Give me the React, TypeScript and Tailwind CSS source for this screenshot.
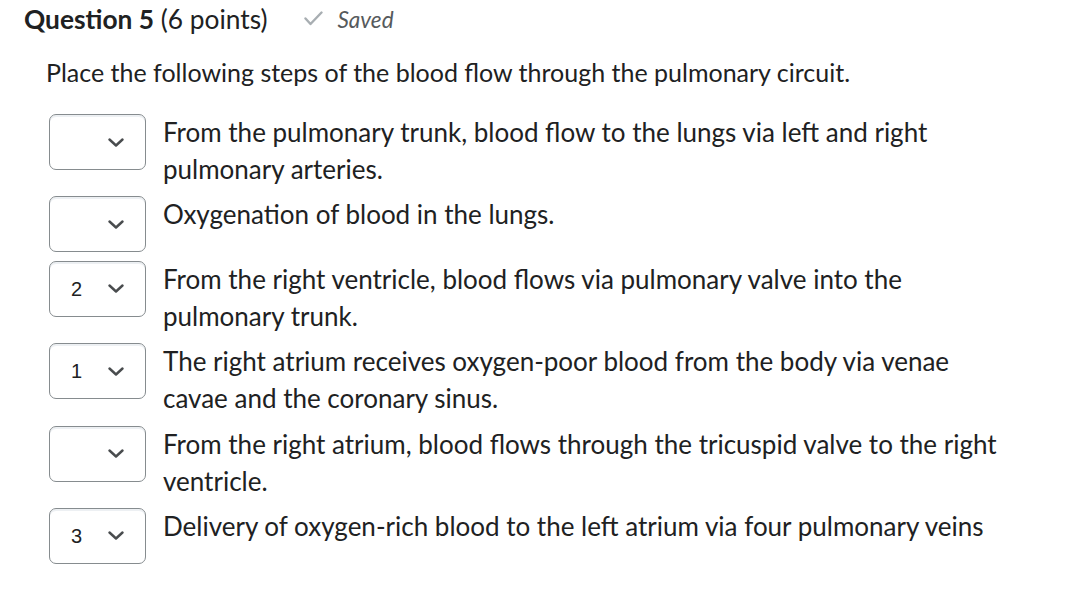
type Step = { value: string; text: string };

const steps: Step[] = [
  { value: '', text: 'From the pulmonary trunk, blood flow to the lungs via left and right pulmonary arteries.' },
  { value: '', text: 'Oxygenation of blood in the lungs.' },
  { value: '2', text: 'From the right ventricle, blood flows via pulmonary valve into the pulmonary trunk.' },
  { value: '1', text: 'The right atrium receives oxygen-poor blood from the body via venae cavae and the coronary sinus.' },
  { value: '', text: 'From the right atrium, blood flows through the tricuspid valve to the right ventricle.' },
  { value: '3', text: 'Delivery of oxygen-rich blood to the left atrium via four pulmonary veins' },
];

function OrderSelect({ value }: { value: string }) {
  return (
    <div className="flex h-[56px] w-[97px] shrink-0 items-center justify-between rounded-[7px] border border-[#868c8f] bg-white pl-[21px] pr-[21px] shadow-[inset_0_2px_0_0_rgba(185,194,208,0.25)]">
      <span className="font-['Liberation_Sans',sans-serif] text-[20px] text-[#202122]">{value}</span>
      <svg width="16" height="9" viewBox="0 0 16 9">
        <path d="M1.5 1.5 L8 7.5 L14.5 1.5" fill="none" stroke="#494c4e" strokeWidth="2.4" strokeLinecap="round" strokeLinejoin="round" />
      </svg>
    </div>
  );
}

export default function App() {
  return (
    <div className="min-h-screen bg-white font-['Lato',sans-serif] text-[#202122]">
      <div className="flex items-center pl-[24px] pt-[1px]">
        <h2 className="text-[26.3px] leading-[37px]">
          <span className="font-bold">Question 5</span> (6 points)
        </h2>
        <div className="ml-[37px] flex items-center gap-[14px] text-[22.5px] italic leading-[37px] text-[#565a5c]">
          <svg width="19" height="15" viewBox="0 0 19 15" className="-mt-[3px]">
            <path d="M1.5 7.5 L6.5 13 L17.5 1.5" fill="none" stroke="#a8aeb2" strokeWidth="2.4" strokeLinecap="round" strokeLinejoin="round" />
          </svg>
          <span>Saved</span>
        </div>
      </div>

      <p className="mt-[16px] pl-[46px] text-[25px] leading-[37px]">
        Place the following steps of the blood flow through the pulmonary circuit.
      </p>

      <div className="mt-[23px] flex flex-col gap-[8.4px] pl-[49px]">
        {steps.map((s) => (
          <div key={s.text} className="flex items-start gap-[17px]">
            <OrderSelect value={s.value} />
            <p className="w-[840px] text-[26px] leading-[37px]">{s.text}</p>
          </div>
        ))}
      </div>
    </div>
  );
}
